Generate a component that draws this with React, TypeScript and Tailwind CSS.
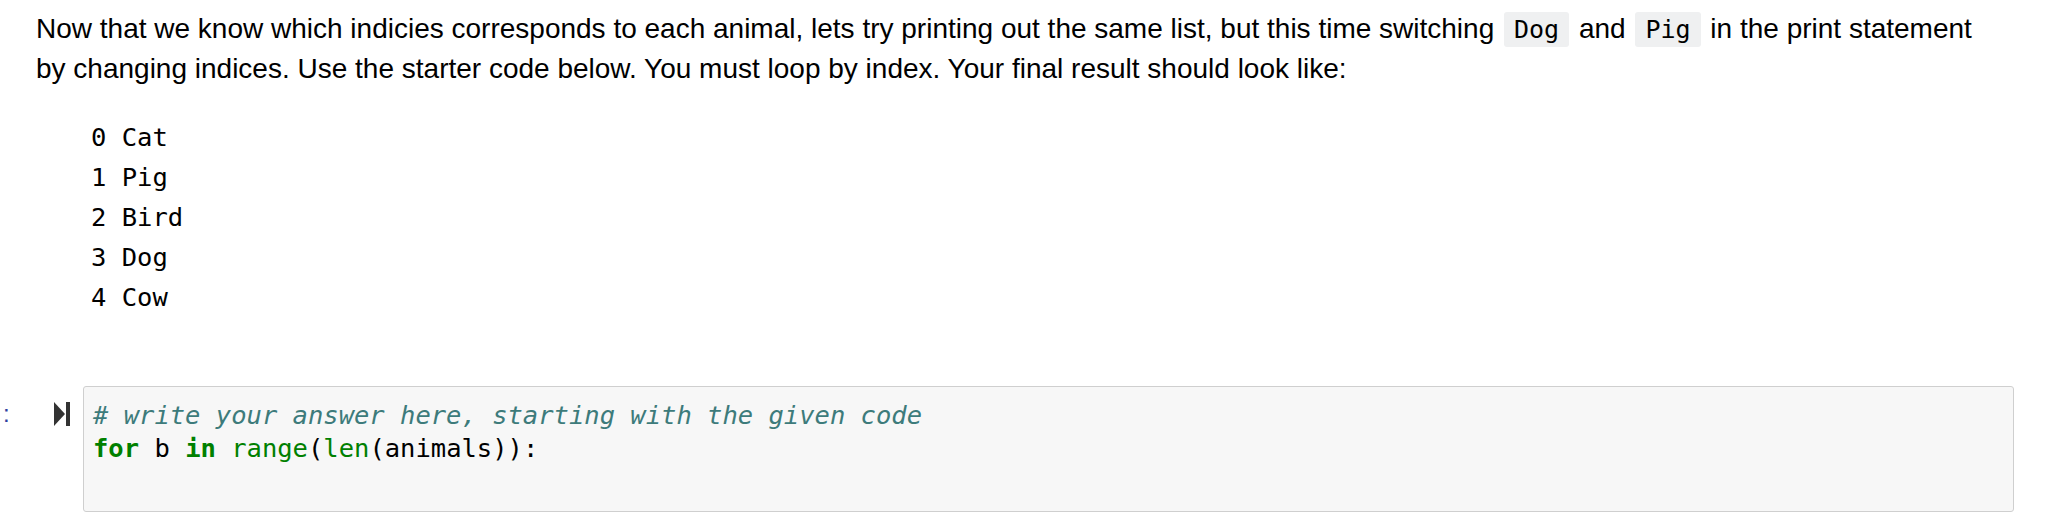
import React from 'react';

const mono = "font-['DejaVu_Sans_Mono','Liberation_Mono',monospace]";

function InlineCode({ children }: { children: React.ReactNode }) {
    return (
        <code className={`${mono} text-[25px] bg-[#eff0f1] rounded-[3px] px-[10px] py-[3px] mx-[2px]`}>
            {children}
        </code>
    );
}

function RunIcon() {
    return (
        <svg width="16" height="24" viewBox="0 0 16 24" className="block">
            <polygon points="0,0 11,12 0,24" fill="#333333" />
            <rect x="12" y="0" width="4" height="24" fill="#333333" />
        </svg>
    );
}

export default function App() {
    const output = ['0 Cat', '1 Pig', '2 Bird', '3 Dog', '4 Cow'];

    return (
        <div className="w-[2046px] h-[524px] bg-white overflow-hidden text-black">
            {/* Markdown cell */}
            <div className="pl-[36px] pr-[60px] pt-[9px] font-['Liberation_Sans',Arial,sans-serif] text-[28px] leading-[39px]">
                <p>
                    Now that we know which indicies corresponds to each animal, lets try printing out the same list, but this time switching <InlineCode>Dog</InlineCode> and <InlineCode>Pig</InlineCode> in the print statement<br />
                    by changing indices. Use the starter code below. You must loop by index. Your final result should look like:
                </p>
                <pre className={`${mono} text-[25.5px] leading-[40px] pl-[55px] pt-[29px]`}>
                    {output.join('\n')}
                </pre>
            </div>

            {/* Code cell */}
            <div className="flex mt-[69px]">
                <div className="w-[83px] shrink-0 flex items-start pt-[16px]">
                    <span className="w-[54px] pl-[3px] text-[24px] leading-[24px] text-[#303f9f] font-['Liberation_Sans',sans-serif]">:</span>
                    <RunIcon />
                </div>
                <div className="flex-1 mr-[32px] h-[126px] bg-[#f7f7f7] border border-[#cfcfcf] rounded-[3px] px-[9px] pt-[12px]">
                    <pre className={`${mono} text-[25.5px] leading-[33px]`}>
                        <span className="italic text-[#3d7b7b]"># write your answer here, starting with the given code</span>
                        {'\n'}
                        <span className="font-bold text-[#008000]">for</span> b <span className="font-bold text-[#008000]">in</span> <span className="text-[#008000]">range</span>(<span className="text-[#008000]">len</span>(animals)):
                    </pre>
                </div>
            </div>
        </div>
    );
}
